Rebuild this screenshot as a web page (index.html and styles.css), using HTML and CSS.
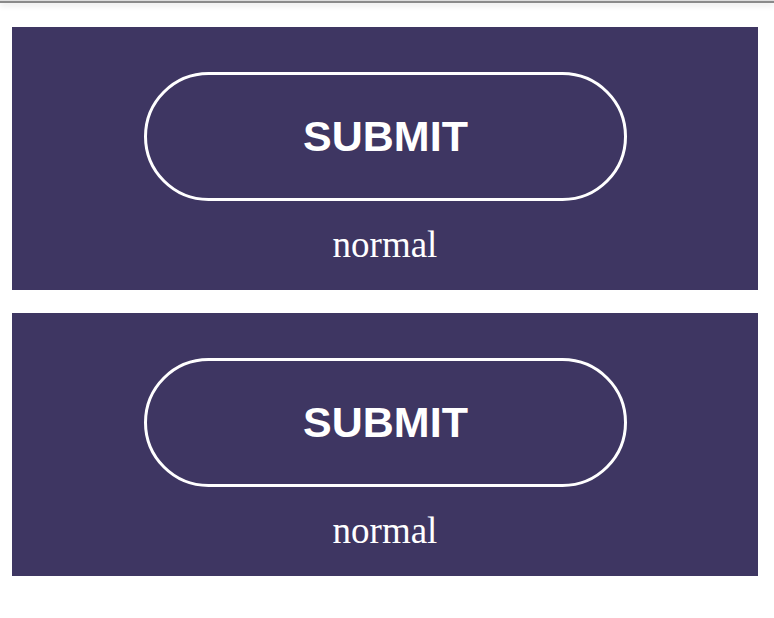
FILE: index.html
```html
<!DOCTYPE html>
<html>
<head>
    <title>Submit buttons</title>
    <link rel="stylesheet" href="styles.css">
</head>
<body>
    <div class="topbar"></div>
    <div class="demo-list">
        <div class="demo">
            <button class="submit-btn">SUBMIT</button>
            <p class="state">normal</p>
        </div>
        <div class="demo">
            <button class="submit-btn">SUBMIT</button>
            <p class="state">normal</p>
        </div>
    </div>
</body>
</html>
```

FILE: styles.css
```css
body {
    margin: 0;
    background: #fff;
}

.topbar {
    height: 2px;
    background: #8a8a8a;
    border-top: 1px solid #dcdcdc;
    box-shadow: 0 2px 6px rgba(0, 0, 0, 0.14);
}

.demo-list {
    display: flex;
    flex-direction: column;
    gap: 23px;
    padding: 24px 16px 0 12px;
}

.demo {
    display: flex;
    flex-direction: column;
    align-items: center;
    height: 263px;
    box-sizing: border-box;
    padding-top: 45px;
    background: #3e3662;
}

.submit-btn {
    width: 483px;
    height: 129px;
    margin-left: 1px;
    border: 3px solid #fff;
    border-radius: 65px;
    background: transparent;
    color: #fff;
    font-family: "Liberation Sans", Arial, sans-serif;
    font-weight: bold;
    font-size: 43px;
    cursor: pointer;
}

.state {
    margin: 23px 0 0;
    color: #fff;
    font-family: "Liberation Serif", "Times New Roman", serif;
    font-size: 37px;
    line-height: 42px;
}
```
